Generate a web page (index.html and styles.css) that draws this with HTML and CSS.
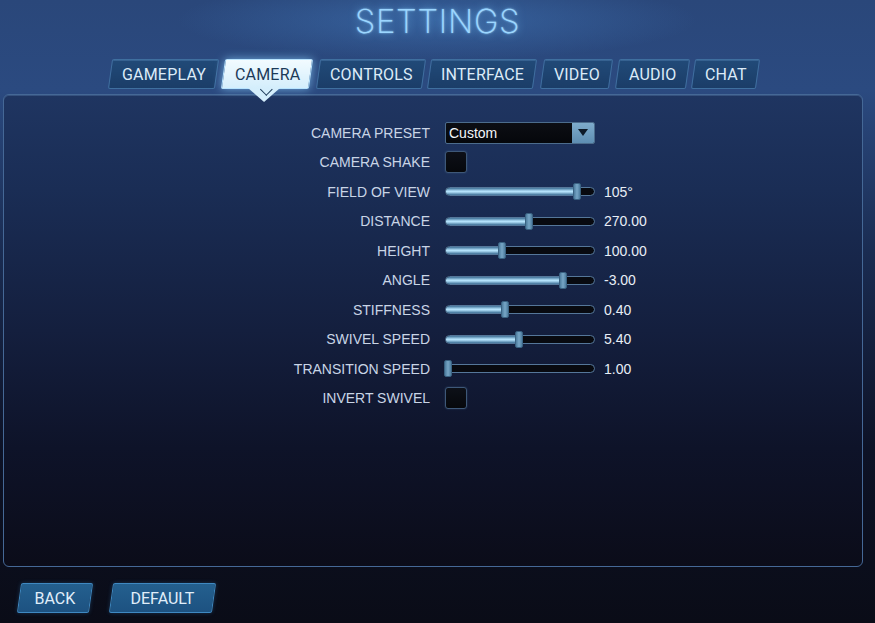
FILE: index.html
```html
<!DOCTYPE html>
<html lang="en">

<head>
    <meta charset="UTF-8">
    <meta name="viewport" content="width=device-width, initial-scale=1.0">
    <title>Settings</title>
    <link rel="stylesheet" href="styles.css">
</head>

<body>
    <div class="screen">
        <div class="header">
            <h1>SETTINGS</h1>
        </div>

        <div class="tabs">
            <div class="tab"><span>GAMEPLAY</span></div>
            <div class="tab active"><span>CAMERA</span></div>
            <div class="tab"><span>CONTROLS</span></div>
            <div class="tab"><span>INTERFACE</span></div>
            <div class="tab"><span>VIDEO</span></div>
            <div class="tab"><span>AUDIO</span></div>
            <div class="tab"><span>CHAT</span></div>
        </div>

        <div class="panel">
            <div class="form">
                <label class="row-label">CAMERA PRESET</label>
                <div class="select">
                    <span class="select-text">Custom</span>
                    <span class="select-btn">
                        <svg width="10" height="7" viewBox="0 0 10 7"><path d="M0 0 L10 0 L5 7 Z" fill="#0d1a28"/></svg>
                    </span>
                </div>
                <span class="value"></span>

                <label class="row-label">CAMERA SHAKE</label>
                <div class="control"><span class="checkbox"></span></div>
                <span class="value"></span>

                <label class="row-label">FIELD OF VIEW</label>
                <div class="slider"><div class="fill" style="width: 88.5%"><span class="thumb"></span></div></div>
                <span class="value">105°</span>

                <label class="row-label">DISTANCE</label>
                <div class="slider"><div class="fill" style="width: 56%"><span class="thumb"></span></div></div>
                <span class="value">270.00</span>

                <label class="row-label">HEIGHT</label>
                <div class="slider"><div class="fill" style="width: 37.5%"><span class="thumb"></span></div></div>
                <span class="value">100.00</span>

                <label class="row-label">ANGLE</label>
                <div class="slider"><div class="fill" style="width: 79%"><span class="thumb"></span></div></div>
                <span class="value">-3.00</span>

                <label class="row-label">STIFFNESS</label>
                <div class="slider"><div class="fill" style="width: 40%"><span class="thumb"></span></div></div>
                <span class="value">0.40</span>

                <label class="row-label">SWIVEL SPEED</label>
                <div class="slider"><div class="fill" style="width: 49%"><span class="thumb"></span></div></div>
                <span class="value">5.40</span>

                <label class="row-label">TRANSITION SPEED</label>
                <div class="slider"><div class="fill" style="width: 1.5%"><span class="thumb"></span></div></div>
                <span class="value">1.00</span>

                <label class="row-label">INVERT SWIVEL</label>
                <div class="control"><span class="checkbox"></span></div>
                <span class="value"></span>
            </div>
        </div>

        <div class="footer">
            <button class="btn btn-back"><span>BACK</span></button>
            <button class="btn btn-default"><span>DEFAULT</span></button>
        </div>
    </div>
</body>

</html>
```

FILE: styles.css
```css
* {
    margin: 0;
    padding: 0;
    box-sizing: border-box;
}

body {
    font-family: 'Liberation Sans', Arial, sans-serif;
    background: #0a0c17;
    width: 875px;
    height: 623px;
    overflow: hidden;
}

.screen {
    height: 623px;
    background:
        radial-gradient(ellipse 260px 40px at 437px 20px, rgba(70, 130, 200, 0.45), rgba(70, 130, 200, 0) 100%),
        linear-gradient(180deg, #2a477a 0px, #2b4a80 90px, #1a2c52 250px, #0d1226 450px, #0a0c17 623px);
}

/* title */
.header {
    height: 57px;
    display: flex;
    justify-content: center;
    align-items: flex-start;
    padding-top: 1px;
}

.header h1 {
    font-family: Inter, 'Open Sans', sans-serif;
    font-weight: 200;
    font-size: 33px;
    line-height: 40px;
    letter-spacing: 0.7px;
    color: #9cd6ff;
    text-shadow: 0 0 8px rgba(120, 200, 255, 0.8), 0 0 2px rgba(160, 220, 255, 0.9);
}

/* tabs */
.tabs {
    display: flex;
    gap: 6px;
    padding-left: 110px;
    height: 30px;
    position: relative;
    z-index: 2;
    margin-top: 2px;
}

.tab {
    height: 30px;
    padding: 0 10.5px;
    display: flex;
    align-items: center;
    background: linear-gradient(180deg, #214a78 0%, #1b3d68 100%);
    border: 1px solid #3f6f9f;
    border-radius: 2px;
    transform: skewX(-8deg);
    position: relative;
    box-shadow: inset 0 1px 0 rgba(120, 170, 220, 0.25);
}

.tab span {
    display: block;
    transform: skewX(8deg);
    font-family: Roboto, 'Liberation Sans', sans-serif;
    font-size: 16px;
    color: #dcebf8;
    letter-spacing: 0.2px;
}

.tab.active {
    background: linear-gradient(180deg, #f2fbff 0%, #d4eefc 100%);
    border-color: #b8e4ff;
    box-shadow: 0 0 10px rgba(140, 210, 255, 0.7);
}

.tab.active span {
    color: #1c3a58;
}

.tab.active::after {
    content: '';
    position: absolute;
    left: 50%;
    bottom: -14px;
    width: 32px;
    height: 14px;
    margin-left: -16px;
    transform: skewX(8deg);
    background: #d4eefc;
    clip-path: polygon(0 0, 100% 0, 50% 100%);
}

.tab.active::before {
    content: '';
    position: absolute;
    left: 50%;
    bottom: -6px;
    width: 8px;
    height: 8px;
    margin-left: -3px;
    border-right: 1.5px solid #1c3a58;
    border-bottom: 1.5px solid #1c3a58;
    transform: skewX(8deg) rotate(45deg);
    z-index: 3;
}

/* panel */
.panel {
    margin: 5px 12px 0 3px;
    height: 473px;
    border: 1px solid #456896;
    border-radius: 6px;
    background: linear-gradient(180deg, #1f3561 0%, #1a2d55 20%, #141f3e 50%, #0e1329 75%, #0b0c19 100%);
    box-shadow: inset 0 1px 0 rgba(110, 150, 200, 0.3);
    padding-top: 23px;
}

.form {
    display: grid;
    grid-template-columns: 200px 150px auto;
    grid-auto-rows: 29.5px;
    column-gap: 15px;
    padding-left: 226px;
    align-items: center;
}

.form .value {
    margin-left: -6px;
}

.row-label {
    text-align: right;
    font-size: 14px;
    color: #c9d5e6;
}

.value {
    font-size: 14px;
    color: #e8eef6;
}

/* dropdown */
.select {
    height: 22px;
    display: flex;
    border: 1px solid #4c6c8c;
    border-radius: 2px;
    background: linear-gradient(180deg, #0c0e14 0%, #05070b 100%);
    overflow: hidden;
}

.select-text {
    flex: 1;
    padding-left: 3px;
    font-size: 14px;
    line-height: 20px;
    color: #f2f6fa;
}

.select-btn {
    width: 22px;
    display: flex;
    align-items: center;
    justify-content: center;
    background: linear-gradient(180deg, #7eaccc 0%, #5e8eb2 100%);
}

/* checkbox */
.control {
    display: flex;
    align-items: center;
}

.checkbox {
    width: 22px;
    height: 22px;
    border: 1px solid #3e5878;
    border-radius: 3px;
    background: linear-gradient(180deg, #0d1018 0%, #06080c 100%);
    box-shadow: 0 0 2px rgba(90, 130, 170, 0.4);
}

/* slider */
.slider {
    height: 9px;
    border: 1px solid #55779a;
    border-radius: 5px;
    background: #080a10;
    position: relative;
}

.fill {
    height: 100%;
    border-radius: 4px 0 0 4px;
    background: linear-gradient(180deg, #3d6f96 0%, #b4e2fb 45%, #b4e2fb 55%, #3d6f96 100%);
    position: relative;
}

.thumb {
    position: absolute;
    right: -4px;
    top: -5px;
    width: 8px;
    height: 17px;
    border-radius: 2px;
    background: linear-gradient(90deg, #4d7c9e 0%, #77a6c6 50%, #4d7c9e 100%);
    border: 1px solid #3a6282;
}

/* footer */
.footer {
    display: flex;
    gap: 20px;
    padding-left: 19px;
    margin-top: 16px;
}

.btn {
    height: 30px;
    border: 1px solid #3f89c2;
    border-radius: 2px;
    background: linear-gradient(180deg, #24608f 0%, #1d5281 100%);
    transform: skewX(-8deg);
    cursor: pointer;
    box-shadow: 0 0 4px rgba(60, 140, 210, 0.3);
}

.btn-back {
    width: 72px;
}

.btn-default {
    width: 103px;
}

.btn span {
    display: block;
    transform: skewX(8deg);
    font-family: Roboto, 'Liberation Sans', sans-serif;
    font-size: 16px;
    color: #e0eefa;
}
```
